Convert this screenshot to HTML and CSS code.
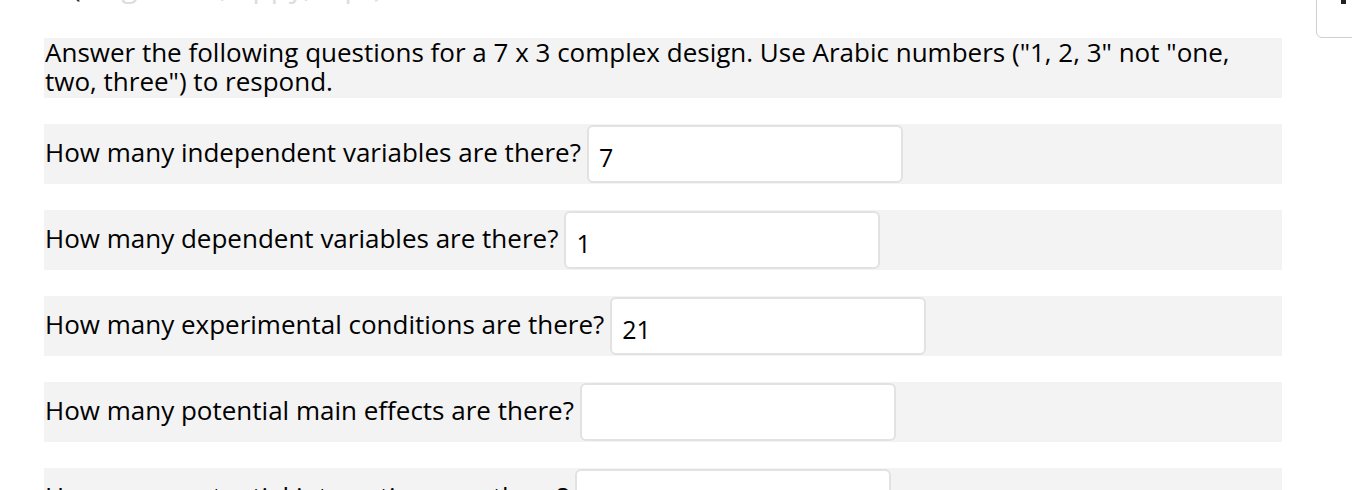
FILE: index.html
```html
<!DOCTYPE html>
<html>
<head>
<meta charset="utf-8">
<link rel="stylesheet" href="styles.css">
</head>
<body>
<div class="top">
  <div class="heading"><span class="paren">(</span><span class="pts">Ungraded, appy, 1 pt)</span></div>
  <div class="topbtn"><span class="glyph"></span></div>
</div>
<div class="content">
  <div class="intro">Answer the following questions for a 7 x 3 complex design. Use Arabic numbers ("1, 2, 3" not "one, two, three") to respond.</div>
  <div class="row"><span class="label">How many independent variables are there?</span><input class="answer" type="text" value="7"></div>
  <div class="row"><span class="label">How many dependent variables are there?</span><input class="answer" type="text" value="1"></div>
  <div class="row"><span class="label">How many experimental conditions are there?</span><input class="answer" type="text" value="21"></div>
  <div class="row"><span class="label">How many potential main effects are there?</span><input class="answer" type="text" value=""></div>
  <div class="row"><span class="label">How many potential interactions are there?</span><input class="answer" type="text" value=""></div>
</div>
</body>
</html>
```
FILE: styles.css
```css
html, body {
  margin: 0;
  padding: 0;
  background: #fff;
  font-family: "Open Sans", "Liberation Sans", sans-serif;
  color: #000;
  overflow: hidden;
}
.top {
  display: flex;
  justify-content: space-between;
  align-items: flex-start;
  height: 38px;
}
.heading {
  margin-top: -31px;
  margin-left: 72px;
  font-size: 30px;
  line-height: 34px;
  white-space: nowrap;
}
.paren { color: #333; }
.pts { color: #ddd; }
.topbtn {
  width: 60px;
  height: 48px;
  margin-top: -10px;
  margin-right: -24px;
  border: 1px solid #cfcfcf;
  border-radius: 6px;
  background: #fff;
  box-sizing: border-box;
}
.glyph {
  display: block;
  width: 5px;
  height: 13px;
  background: #222;
  margin-left: 24px;
}
.content {
  width: 1238px;
  margin-left: 44px;
  display: flex;
  flex-direction: column;
  gap: 26px;
}
.intro {
  background: #f3f3f3;
  font-size: 26px;
  line-height: 29px;
  padding: 0 40px 0 1px;
  height: 60px;
  box-sizing: border-box;
}
.row {
  background: #f3f3f3;
  height: 60px;
  display: flex;
  align-items: center;
  padding-left: 1px;
}
.label {
  font-size: 26px;
  line-height: 30px;
  margin-right: 6px;
  margin-top: -5px;
}
.answer {
  width: 316px;
  height: 58px;
  box-sizing: border-box;
  border: 2px solid #e2e2e2;
  border-radius: 6px;
  background: #fff;
  font-family: "Open Sans", "Liberation Sans", sans-serif;
  font-size: 25px;
  color: #000;
  padding: 5px 10px 0;
  outline: none;
}
```
